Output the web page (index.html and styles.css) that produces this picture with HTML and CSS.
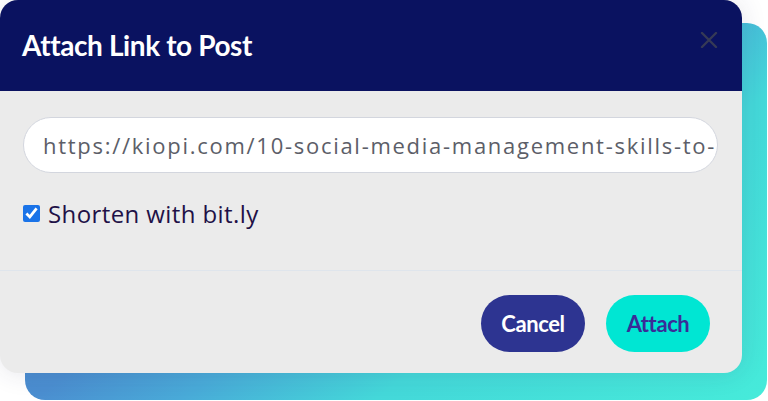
FILE: index.html
```html
<!DOCTYPE html>
<html lang="en">
<head>
<meta charset="utf-8">
<title>Attach Link to Post</title>
<link rel="stylesheet" href="styles.css">
</head>
<body>
<div class="stage">
  <div class="backdrop-card"></div>
  <div class="modal">
    <div class="modal-header">
      <h1 class="modal-title">Attach Link to Post</h1>
      <button class="close-btn" aria-label="Close">
        <svg width="18" height="16" viewBox="0 0 18 16"><path d="M2 1 L16 15 M16 1 L2 15" stroke="#363a56" stroke-width="2.4" stroke-linecap="round"/></svg>
      </button>
    </div>
    <div class="modal-body">
      <div class="url-field"><span class="url-text">https://kiopi.com/10-social-media-management-skills-to-</span></div>
      <label class="check-row">
        <input type="checkbox" class="check" checked>
        <span class="check-label">Shorten with bit.ly</span>
      </label>
    </div>
    <div class="modal-footer">
      <button class="btn btn-cancel">Cancel</button>
      <button class="btn btn-attach">Attach</button>
    </div>
  </div>
</div>
</body>
</html>
```
FILE: styles.css
```css
html, body {
  margin: 0;
  padding: 0;
  background: #ffffff;
  width: 768px;
  height: 401px;
  overflow: hidden;
}
.stage {
  position: relative;
  width: 768px;
  height: 401px;
}
.backdrop-card {
  position: absolute;
  left: 25px;
  top: 23px;
  width: 742px;
  height: 377px;
  border-radius: 20px;
  background: linear-gradient(142deg, #4a7fcf 0%, #4b8ed0 40%, #49aad8 52%, #44d8d9 68%, #46ebda 100%);
}
.modal {
  position: relative;
  width: 742px;
  height: 373px;
  border-radius: 18px;
  background: #ebebeb;
  overflow: hidden;
  box-shadow: 0 0 26px rgba(40, 40, 80, 0.12);
  display: flex;
  flex-direction: column;
}
.modal-header {
  height: 91px;
  background: #0a1260;
  display: flex;
  align-items: center;
  justify-content: space-between;
  padding: 0 24px 0 22px;
  flex: none;
}
.modal-title {
  margin: 0;
  font-family: "Lato", "Liberation Sans", sans-serif;
  font-weight: 700;
  font-size: 28px;
  letter-spacing: -0.4px;
  color: #ffffff;
  margin-top: -2px;
}
.close-btn {
  background: none;
  border: 0;
  padding: 0;
  width: 18px;
  height: 16px;
  display: flex;
  margin-top: -11px;
}
.modal-body {
  padding: 26px 24px 0 23px;
  height: 180px;
  border-bottom: 1px solid #dfe5ec;
  box-sizing: border-box;
  flex: none;
}
.url-field {
  height: 56px;
  box-sizing: border-box;
  border: 1px solid #d3d6de;
  border-radius: 28px;
  background: #ffffff;
  padding: 0 0 0 19px;
  display: flex;
  align-items: center;
  white-space: nowrap;
  overflow: hidden;
}
.url-text {
  font-family: "Open Sans", "Liberation Sans", sans-serif;
  font-size: 22px;
  letter-spacing: 1.72px;
  color: #5c5e68;
}
.check-row {
  display: flex;
  align-items: center;
  gap: 8px;
  margin-top: 24px;
}
.check {
  margin: 0;
  width: 17px;
  height: 17px;
  accent-color: #1a73e8;
}
.check-label {
  font-family: "Open Sans", "Liberation Sans", sans-serif;
  font-size: 24px;
  color: #1f1147;
  letter-spacing: 0.4px;
}
.modal-footer {
  flex: 1;
  display: flex;
  justify-content: flex-end;
  align-items: flex-start;
  gap: 21px;
  padding: 24px 32px 0 0;
}
.btn {
  width: 104px;
  height: 57px;
  border: 0;
  border-radius: 29px;
  font-family: "Lato", "Liberation Sans", sans-serif;
  font-weight: 700;
  font-size: 22px;
  letter-spacing: -0.4px;
  padding: 0;
}
.btn-cancel {
  background: #2d3491;
  color: #ffffff;
}
.btn-attach {
  background: #00e6d3;
  color: #3a2c98;
}
```
